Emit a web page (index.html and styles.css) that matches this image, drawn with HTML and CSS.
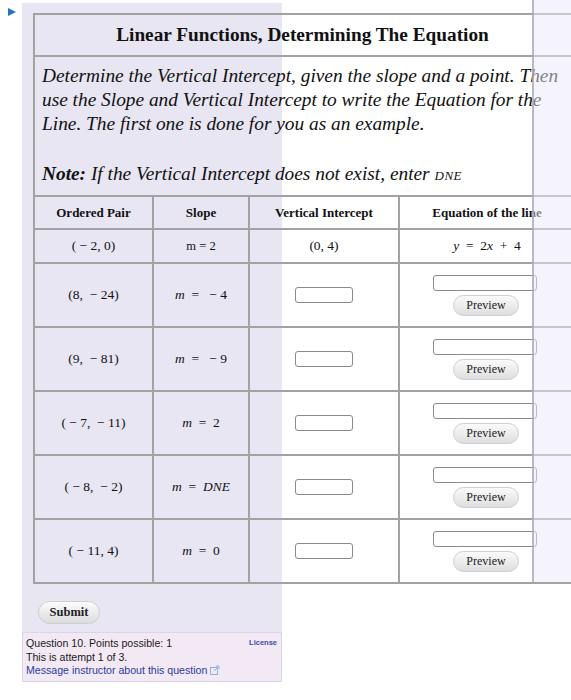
FILE: index.html
```html
<!DOCTYPE html>
<html>
<head>
<meta charset="utf-8">
<link rel="stylesheet" href="styles.css">
</head>
<body>
<div class="page">
  <div class="arrow"></div>
  <div class="question">
    <div class="qbody">
      <div class="problem">
        <div class="title">Linear Functions, Determining The Equation</div>
        <div class="desc">
          <p class="instr">Determine the Vertical Intercept, given the slope and a point. Then<br>use the Slope and Vertical Intercept to write the Equation for the<br>Line. The first one is done for you as an example.</p>
          <p class="note"><b>Note:</b> If the Vertical Intercept does not exist, enter <span class="dne">DNE</span></p>
        </div>
        <table class="grid">
          <colgroup>
            <col class="c1"><col class="c2"><col class="c3"><col class="c4">
          </colgroup>
          <tr class="head">
            <th>Ordered Pair</th><th>Slope</th><th>Vertical Intercept</th><th>Equation of the line</th>
          </tr>
          <tr class="example">
            <td>( − 2, 0)</td><td class="small">m = 2</td><td>(0, 4)</td><td class="eqtext"><i>y</i>&ensp;=&ensp;2<i>x</i>&ensp;+&ensp;4</td>
          </tr>
          <tr class="row">
            <td>(8, &nbsp;− 24)</td><td><i>m</i> &nbsp;= &nbsp;&nbsp;− 4</td><td><span class="box vi"></span></td>
            <td><span class="box eq"></span><button class="preview">Preview</button></td>
          </tr>
          <tr class="row">
            <td>(9, &nbsp;− 81)</td><td><i>m</i> &nbsp;= &nbsp;&nbsp;− 9</td><td><span class="box vi"></span></td>
            <td><span class="box eq"></span><button class="preview">Preview</button></td>
          </tr>
          <tr class="row">
            <td>( − 7, &nbsp;− 11)</td><td><i>m</i> &nbsp;= &nbsp;2</td><td><span class="box vi"></span></td>
            <td><span class="box eq"></span><button class="preview">Preview</button></td>
          </tr>
          <tr class="row">
            <td>( − 8, &nbsp;− 2)</td><td><i>m</i> &nbsp;= &nbsp;<i>DNE</i></td><td><span class="box vi"></span></td>
            <td><span class="box eq"></span><button class="preview">Preview</button></td>
          </tr>
          <tr class="row">
            <td>( − 11, 4)</td><td><i>m</i> &nbsp;= &nbsp;0</td><td><span class="box vi"></span></td>
            <td><span class="box eq"></span><button class="preview">Preview</button></td>
          </tr>
        </table>
      </div>
      <button class="submit">Submit</button>
    </div>
    <div class="qfoot">
      <div class="info">
        <div>Question 10. Points possible: 1</div>
        <div>This is attempt 1 of 3.</div>
        <div class="msg">Message instructor about this question <svg class="ext" width="10" height="10" viewBox="0 0 10 10"><rect x="0.5" y="2.5" width="7" height="7" fill="none" stroke="#8fb0e0" stroke-width="1"/><path d="M4 6 L9 1 M6 1 H9 V4" fill="none" stroke="#8fb0e0" stroke-width="1"/></svg></div>
      </div>
      <div class="license">License</div>
    </div>
  </div>
</div>
<div class="strip"></div>
</body>
</html>
```
FILE: styles.css
```css
html, body {
  margin: 0;
  padding: 0;
  overflow: hidden;
  background: #ffffff;
}
body {
  width: 571px;
  height: 700px;
  position: relative;
  font-family: "Liberation Serif", "Times New Roman", serif;
  color: #111;
}
.page {
  display: flex;
  align-items: flex-start;
  padding: 3px 0 0 8px;
}
.arrow {
  width: 0;
  height: 0;
  margin-top: 5px;
  margin-right: 6px;
  border-left: 8px solid #1f74c6;
  border-top: 4.5px solid transparent;
  border-bottom: 4.5px solid transparent;
}
.question {
  width: 260px;
  flex: none;
}
.qbody {
  background: #e8e6f3;
  padding: 10px 0 9px 11px;
  height: 629px;
  box-sizing: border-box;
}
.problem {
  width: 541px;
}
.title {
  border: 2px solid #a2a2a2;
  height: 40px;
  line-height: 40px;
  text-align: center;
  font-weight: bold;
  font-size: 19.3px;
  padding-right: 2px;
}
.desc {
  border-left: 2px solid #a2a2a2;
  border-right: 2px solid #a2a2a2;
  padding: 7px 4px 7px 7px;
  font-style: italic;
  font-size: 19.35px;
  line-height: 24px;
}
.desc p {
  margin: 0;
}
.desc .note {
  margin-top: 26px;
}
.dne {
  font-size: 13px;
  letter-spacing: 0.5px;
}
.grid {
  border-collapse: collapse;
  width: 541px;
  table-layout: fixed;
}
.c1 { width: 119px; }
.c2 { width: 96px; }
.c3 { width: 150px; }
.c4 { width: 176px; }
.grid th, .grid td {
  border: 2px solid #a2a2a2;
  text-align: center;
  padding: 0;
  font-size: 13.5px;
}
.grid th {
  height: 31px;
  font-weight: bold;
  font-size: 13px;
}
.grid td.small {
  font-size: 12.5px;
}
.example td {
  height: 32px;
}
.row td {
  height: 62px;
}
.eqtext {
  padding-right: 2px;
}
.box {
  display: block;
  margin: 0 auto;
  border: 1px solid #8a8a8a;
  border-radius: 3px;
  background: #fff;
  box-sizing: border-box;
  height: 16px;
}
.vi { width: 58px; margin-left: 45px; }
.eq { width: 104px; margin-left: 33px; }
.preview {
  display: block;
  margin: 4px 0 0 53px;
  width: 66px;
  height: 21px;
  border: 1px solid #cfcfcf;
  border-radius: 11px;
  background: linear-gradient(#fbfbfb, #dedede);
  font-family: "Liberation Serif", "Times New Roman", serif;
  font-size: 12px;
  color: #222;
  padding: 0;
}
.submit {
  display: block;
  margin: 17px 0 0 5px;
  width: 62px;
  height: 23px;
  border: 1px solid #cfcfcf;
  border-radius: 12px;
  background: linear-gradient(#fbfbfb, #dcdcdc);
  font-family: "Liberation Serif", "Times New Roman", serif;
  font-size: 12.5px;
  font-weight: bold;
  color: #222;
  padding: 0;
}
.qfoot {
  display: flex;
  justify-content: space-between;
  align-items: flex-start;
  background: #f3e9f4;
  border: 1px solid #dcd4ec;
  height: 50px;
  box-sizing: border-box;
  padding: 4px 4px 0 3px;
  font-family: "Liberation Sans", Arial, sans-serif;
  font-size: 10.6px;
  line-height: 13.5px;
  color: #1a1a1a;
}
.msg {
  color: #2b3a9c;
}
.ext {
  vertical-align: -1px;
}
.license {
  font-size: 7.5px;
  font-weight: bold;
  color: #3b4aa8;
  line-height: 10px;
  margin-top: 1px;
}
.strip {
  position: absolute;
  left: 532px;
  top: 0;
  width: 39px;
  height: 582px;
  background: rgba(236, 234, 252, 0.5);
  border-left: 2px solid rgba(160, 160, 170, 0.7);
}
```
